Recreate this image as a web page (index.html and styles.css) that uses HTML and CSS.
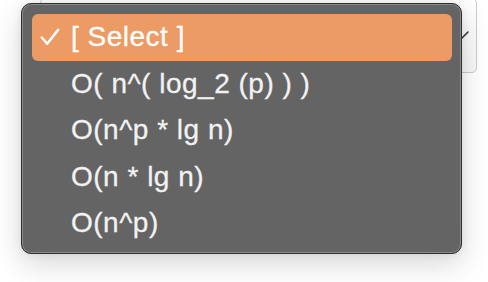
FILE: index.html
```html
<!DOCTYPE html>
<html>
<head>
<meta charset="utf-8">
<link rel="stylesheet" href="styles.css">
</head>
<body>
<div class="stage">
  <div class="select">
    <svg class="chev" width="16" height="10" viewBox="0 0 16 10"><path d="M2 2 L8 8 L14 2" fill="none" stroke="#3a3a3a" stroke-width="1.6" stroke-linecap="round" stroke-linejoin="round"/></svg>
  </div>
  <ul class="menu">
    <li class="item selected"><svg class="check" width="20" height="18" viewBox="0 0 20 18"><path d="M1.8 9.5 L7.2 15.8 L18.2 1.8" fill="none" stroke="#fff" stroke-width="2.5" stroke-linecap="round" stroke-linejoin="round"/></svg><span>[ Select ]</span></li>
    <li class="item"><span>O( n^( log_2 (p) ) )</span></li>
    <li class="item"><span>O(n^p * lg n)</span></li>
    <li class="item"><span>O(n * lg n)</span></li>
    <li class="item"><span>O(n^p)</span></li>
  </ul>
</div>
</body>
</html>
```
FILE: styles.css
```css
html, body {
  margin: 0;
  padding: 0;
  background: #ffffff;
}
.stage {
  position: relative;
  width: 488px;
  height: 282px;
  overflow: hidden;
  padding: 0 0 0 40px;
  box-sizing: border-box;
}
.select {
  position: relative;
  margin-top: -2px;
  width: 437px;
  height: 75px;
  box-sizing: border-box;
  border: 1px solid #cbcbcb;
  border-radius: 5px;
  background: linear-gradient(#ffffff, #f7f7f7);
}
.chev {
  position: absolute;
  left: 413px;
  top: 31px;
}
.menu {
  position: absolute;
  left: 21px;
  top: 3px;
  width: 441px;
  height: 251px;
  margin: 0;
  padding: 10px 9px 9px 10px;
  box-sizing: border-box;
  list-style: none;
  background: #646464;
  border: 1px solid #2e2e2e;
  border-radius: 10px;
  box-shadow: inset 0 0 0 1px #8a8a8a, 0 10px 30px rgba(0,0,0,0.16), 0 0 8px rgba(0,0,0,0.08);
  font-family: "Liberation Sans", Arial, sans-serif;
  font-size: 28px;
  letter-spacing: 0.5px;
  color: #f2f2f2;
}
.item {
  display: flex;
  align-items: center;
  height: 46.5px;
  padding-left: 39px;
  border-radius: 6px;
  white-space: nowrap;
  -webkit-text-stroke: 0.3px currentColor;
}
.item.selected {
  background: #ec9b65;
  color: #ffffff;
  padding-left: 8px;
}
.check {
  margin-right: 11px;
}
```
